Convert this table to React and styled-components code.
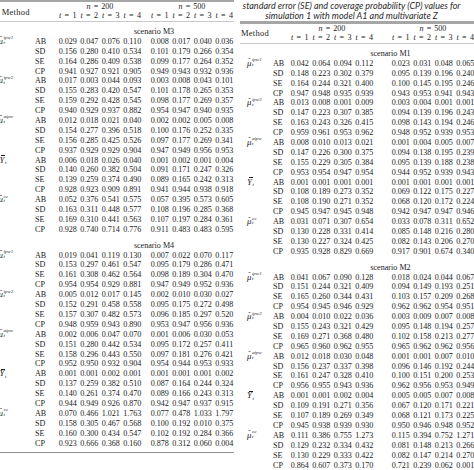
import React from 'react';
import styled, { createGlobalStyle } from 'styled-components';

const GlobalStyle = createGlobalStyle`
  html, body { margin: 0; padding: 0; background: #fff; overflow: hidden; }
  body { width: 474px; height: 470px; }
`;

const Page = styled.div`
  display: flex;
  align-items: flex-start;
  width: 474px;
  height: 470px;
  overflow: hidden;
  background: #fff;
`;

const Panel = styled.section`
  flex: none;
  margin-left: ${p => p.$offset}px;
  display: flex;
  flex-direction: column;
`;

const Caption = styled.div`
  font-family: Lato, "Open Sans", sans-serif;
  font-style: italic;
  font-size: 9px;
  line-height: 10px;
  color: #2b2b2b;
  text-align: center;
  padding: 0.7px ${p => p.$shift}px 0.8px 0;
  white-space: nowrap;
`;

const Table = styled.div`
  display: flex;
  flex-direction: column;
  font-family: "Liberation Serif", "DejaVu Serif", serif;
  font-size: 8.1px;
  color: #1c1c1c;
`;

const Rule = styled.div`
  height: ${p => p.$h}px;
  background: ${p => p.$c};
  margin-top: ${p => p.$mt || 0}px;
  margin-bottom: ${p => p.$mb || 0}px;
`;

const HeadGrid = styled.div`
  display: grid;
  grid-template-columns: ${p => p.$cols};
  grid-template-rows: 8.5px 10px;
  column-gap: 2px;
  align-items: center;
  line-height: 9px;
  white-space: nowrap;
`;

const MethodHead = styled.div`
  grid-column: 1 / 3;
  grid-row: 1 / 3;
  padding-left: ${p => p.$pad}px;
  padding-top: ${p => p.$pt}px;
  font-size: 8.5px;
  letter-spacing: 0.25px;
`;

const NHead = styled.div`
  grid-row: 1;
  grid-column: ${p => p.$span};
  text-align: center;
  word-spacing: 1px;
`;

const THead = styled.div`
  grid-row: 2;
  grid-column: ${p => p.$col};
  text-align: center;
  word-spacing: 1.3px;
`;

const I = styled.i`
  font-style: italic;
`;

const Row = styled.div`
  display: grid;
  grid-template-columns: ${p => p.$cols};
  column-gap: 2px;
  height: 9.9px;
  line-height: 9.9px;
  white-space: nowrap;
  margin-top: ${p => p.$mt || 0}px;
`;

const MethodCell = styled.div`
  padding-left: ${p => p.$pad}px;
  position: relative;
`;

const StatCell = styled.div``;

const Num = styled.div`
  text-align: center;
`;

const Scenario = styled.div`
  grid-column: 3 / 12;
  text-align: center;
  padding-left: 16px;
`;

const Sym = styled.span`
  display: inline-flex;
  align-items: center;
  height: 9.9px;
  vertical-align: top;
`;

const Base = styled.span`
  position: relative;
  font-style: italic;
  font-size: 8.8px;
  line-height: 9.9px;
  ${p => p.$bar && `
    &::before {
      content: '';
      position: absolute;
      left: 1.8px;
      right: -0.6px;
      top: -0.2px;
      height: 0.6px;
      background: currentColor;
    }
  `}
`;

const Hat = styled.span`
  position: absolute;
  left: 1.2px;
  top: -2.6px;
  font-style: normal;
  font-size: 7px;
`;

const Scripts = styled.span`
  display: inline-flex;
  flex-direction: column;
  align-items: flex-start;
  font-style: italic;
  font-size: 5px;
  line-height: 4.8px;
  margin-left: 0.5px;
  margin-top: ${p => (p.$subOnly ? 6 : -1.5)}px;
`;

const parse = s =>
  s.trim().split('\n').map(l => l.trim().split(/\s+/));

const M3 = parse(`
AB 0.029 0.047 0.076 0.110 0.008 0.017 0.040 0.036
SD 0.156 0.280 0.410 0.534 0.101 0.179 0.266 0.354
SE 0.164 0.286 0.409 0.538 0.099 0.177 0.264 0.352
CP 0.941 0.927 0.921 0.905 0.949 0.943 0.932 0.936
AB 0.017 0.003 0.044 0.093 0.003 0.008 0.043 0.101
SD 0.155 0.283 0.420 0.547 0.101 0.178 0.265 0.353
SE 0.159 0.292 0.428 0.545 0.098 0.177 0.269 0.357
CP 0.940 0.929 0.937 0.882 0.954 0.947 0.940 0.935
AB 0.012 0.018 0.021 0.040 0.002 0.002 0.005 0.008
SD 0.154 0.277 0.396 0.518 0.100 0.176 0.252 0.335
SE 0.156 0.285 0.425 0.526 0.097 0.177 0.269 0.341
CP 0.937 0.929 0.929 0.904 0.947 0.949 0.956 0.953
AB 0.006 0.018 0.026 0.040 0.001 0.002 0.001 0.004
SD 0.140 0.260 0.382 0.504 0.091 0.171 0.247 0.326
SE 0.139 0.259 0.374 0.490 0.089 0.165 0.242 0.313
CP 0.928 0.923 0.909 0.891 0.941 0.944 0.938 0.918
AB 0.052 0.376 0.541 0.575 0.057 0.395 0.573 0.605
SD 0.163 0.311 0.448 0.577 0.108 0.196 0.285 0.368
SE 0.169 0.310 0.441 0.563 0.107 0.197 0.284 0.361
CP 0.928 0.740 0.714 0.776 0.911 0.483 0.483 0.595
`);

const M4 = parse(`
AB 0.019 0.041 0.119 0.130 0.007 0.022 0.070 0.117
SD 0.153 0.297 0.461 0.547 0.095 0.179 0.286 0.471
SE 0.161 0.308 0.462 0.564 0.098 0.189 0.304 0.470
CP 0.954 0.954 0.929 0.881 0.947 0.949 0.952 0.936
AB 0.005 0.012 0.017 0.145 0.002 0.010 0.030 0.027
SD 0.152 0.291 0.458 0.558 0.095 0.175 0.272 0.498
SE 0.157 0.307 0.482 0.573 0.096 0.185 0.297 0.520
CP 0.948 0.959 0.943 0.890 0.953 0.947 0.956 0.936
AB 0.002 0.006 0.047 0.070 0.001 0.006 0.030 0.053
SD 0.151 0.280 0.442 0.534 0.095 0.172 0.257 0.411
SE 0.158 0.296 0.443 0.550 0.097 0.181 0.276 0.421
CP 0.952 0.950 0.932 0.904 0.954 0.944 0.953 0.933
AB 0.001 0.001 0.002 0.001 0.001 0.001 0.001 0.002
SD 0.137 0.259 0.382 0.510 0.087 0.164 0.244 0.324
SE 0.140 0.261 0.374 0.470 0.089 0.166 0.243 0.313
CP 0.944 0.949 0.926 0.870 0.942 0.947 0.937 0.915
AB 0.070 0.466 1.021 1.763 0.077 0.478 1.033 1.797
SD 0.158 0.305 0.467 0.568 0.100 0.192 0.010 0.375
SE 0.160 0.300 0.434 0.547 0.102 0.192 0.284 0.366
CP 0.923 0.666 0.368 0.160 0.878 0.312 0.060 0.004
`);

const M1 = parse(`
AB 0.042 0.064 0.094 0.112 0.023 0.031 0.048 0.065
SD 0.148 0.223 0.302 0.379 0.095 0.139 0.196 0.240
SE 0.164 0.244 0.321 0.400 0.100 0.145 0.195 0.246
CP 0.947 0.948 0.935 0.939 0.943 0.953 0.941 0.943
AB 0.013 0.008 0.001 0.009 0.003 0.004 0.001 0.001
SD 0.147 0.223 0.307 0.385 0.094 0.139 0.196 0.243
SE 0.163 0.243 0.326 0.415 0.098 0.143 0.194 0.246
CP 0.959 0.961 0.953 0.962 0.948 0.952 0.939 0.953
AB 0.008 0.010 0.013 0.021 0.001 0.004 0.005 0.007
SD 0.147 0.226 0.300 0.375 0.094 0.138 0.195 0.239
SE 0.155 0.229 0.305 0.384 0.095 0.139 0.188 0.238
CP 0.953 0.954 0.947 0.954 0.944 0.952 0.939 0.943
AB 0.001 0.001 0.001 0.001 0.001 0.001 0.001 0.001
SD 0.108 0.189 0.273 0.352 0.069 0.122 0.175 0.227
SE 0.108 0.190 0.271 0.352 0.068 0.120 0.172 0.224
CP 0.945 0.947 0.945 0.948 0.942 0.947 0.947 0.946
AB 0.031 0.071 0.307 0.654 0.033 0.078 0.311 0.652
SD 0.130 0.228 0.331 0.414 0.085 0.148 0.216 0.280
SE 0.130 0.227 0.324 0.425 0.082 0.143 0.206 0.270
CP 0.935 0.928 0.829 0.669 0.917 0.901 0.674 0.340
`);

const M2 = parse(`
AB 0.041 0.067 0.090 0.128 0.018 0.024 0.044 0.067
SD 0.151 0.244 0.321 0.409 0.094 0.149 0.193 0.251
SE 0.165 0.260 0.344 0.431 0.103 0.157 0.209 0.268
CP 0.954 0.945 0.946 0.929 0.962 0.962 0.954 0.951
AB 0.004 0.010 0.022 0.036 0.003 0.009 0.007 0.008
SD 0.155 0.243 0.321 0.429 0.095 0.148 0.194 0.257
SE 0.169 0.271 0.368 0.480 0.102 0.158 0.213 0.277
CP 0.965 0.960 0.962 0.955 0.965 0.962 0.962 0.956
AB 0.012 0.018 0.030 0.048 0.001 0.001 0.007 0.010
SD 0.156 0.237 0.337 0.398 0.096 0.146 0.192 0.244
SE 0.161 0.247 0.328 0.410 0.100 0.151 0.200 0.253
CP 0.956 0.955 0.943 0.936 0.962 0.956 0.953 0.949
AB 0.001 0.001 0.002 0.004 0.005 0.005 0.007 0.008
SD 0.109 0.191 0.271 0.356 0.067 0.120 0.171 0.221
SE 0.107 0.189 0.269 0.349 0.068 0.121 0.173 0.225
CP 0.945 0.938 0.939 0.930 0.950 0.946 0.948 0.952
AB 0.111 0.386 0.755 1.273 0.115 0.394 0.752 1.271
SD 0.129 0.232 0.334 0.432 0.081 0.148 0.213 0.266
SE 0.130 0.229 0.333 0.422 0.082 0.147 0.214 0.270
CP 0.864 0.607 0.373 0.170 0.721 0.239 0.062 0.001
`);

const METHODS = [
  { key: 'ipw1', sup: 'ipw1' },
  { key: 'ipw2', sup: 'ipw2' },
  { key: 'aipw', sup: 'aipw' },
  { key: 'ybar', bar: true },
  { key: 'cc', sup: 'cc' },
];

function MethodSymbol({ m }) {
  if (m.bar) {
    return (
      <Sym>
        <Base $bar>Y</Base>
        <Scripts $subOnly>
          <span>t</span>
        </Scripts>
      </Sym>
    );
  }
  return (
    <Sym>
      <Base>
        μ<Hat>ˆ</Hat>
      </Base>
      <Scripts>
        <span>{m.sup}</span>
        <span>t</span>
      </Scripts>
    </Sym>
  );
}

function ScenarioBlock({ cfg, name, rows, mt }) {
  return (
    <>
      <Row $cols={cfg.cols} $mt={mt}>
        <Scenario>scenario {name}</Scenario>
      </Row>
      {rows.map((r, i) => {
        const m = METHODS[Math.floor(i / 4)];
        const first = i % 4 === 0;
        return (
          <Row key={i} $cols={cfg.cols}>
            <MethodCell $pad={m.bar ? cfg.ybarPad : cfg.symPad}>
              {first && <MethodSymbol m={m} />}
            </MethodCell>
            <StatCell>{r[0]}</StatCell>
            {r.slice(1, 5).map((v, j) => (
              <Num key={j}>{v}</Num>
            ))}
            <div />
            {r.slice(5, 9).map((v, j) => (
              <Num key={j}>{v}</Num>
            ))}
          </Row>
        );
      })}
    </>
  );
}

function ResultTable({ cfg }) {
  return (
    <Table>
      <Rule $h={cfg.topRule} $c="#a6a6a6" />
      <HeadGrid $cols={cfg.cols}>
        <MethodHead $pad={cfg.headPad} $pt={cfg.headPt}>Method</MethodHead>
        <NHead $span="3 / 7">
          <I>n</I> = 200
        </NHead>
        <NHead $span="8 / 12">
          <I>n</I> = 500
        </NHead>
        {[3, 4, 5, 6, 8, 9, 10, 11].map((c, k) => (
          <THead key={c} $col={c}>
            <I>t</I> = {(k % 4) + 1}
          </THead>
        ))}
      </HeadGrid>
      <Rule $h={1} $c="#c9c9c9" $mt={0.5} $mb={5} />
      <ScenarioBlock cfg={cfg} name={cfg.names[0]} rows={cfg.data[0]} mt={0} />
      <ScenarioBlock cfg={cfg} name={cfg.names[1]} rows={cfg.data[1]} mt={6} />
      <Rule $h={1} $c="#8e8e8e" $mt={3.5} />
    </Table>
  );
}

const LEFT = {
  offset: -3,
  cols: '36px 21px repeat(4, 19.5px) 4px repeat(4, 19.5px)',
  headPad: 4.7,
  headPt: 2,
  symPad: 1.5,
  ybarPad: 2.5,
  topRule: 2,
  names: ['M3', 'M4'],
  data: [M3, M4],
};

const RIGHT = {
  offset: 6,
  cols: '31px 15px repeat(4, 19.5px) 13px repeat(4, 19.5px)',
  headPad: 1,
  headPt: 1.5,
  symPad: 7,
  ybarPad: 7,
  topRule: 2.5,
  names: ['M1', 'M2'],
  data: [M1, M2],
};

export default function App() {
  return (
    <>
      <GlobalStyle />
      <Page>
        <Panel $offset={LEFT.offset}>
          <ResultTable cfg={LEFT} />
        </Panel>
        <Panel $offset={RIGHT.offset}>
          <Caption $shift={12}>
            standard error (SE) and coverage probability (CP) values for
            <br />
            simulation 1 with model A1 and multivariate Z
          </Caption>
          <ResultTable cfg={RIGHT} />
        </Panel>
      </Page>
    </>
  );
}
